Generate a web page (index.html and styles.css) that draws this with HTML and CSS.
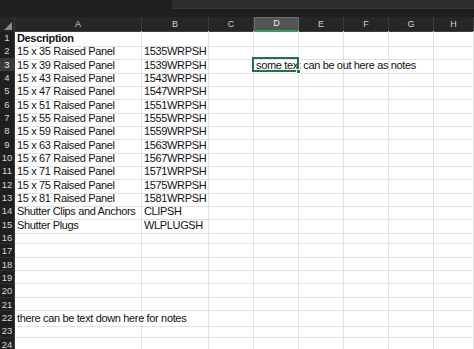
FILE: index.html
```html
<!DOCTYPE html>
<html>
<head>
<meta charset="utf-8">
<link rel="stylesheet" href="styles.css">
</head>
<body>
<div class="app">
  <div class="topbar"><div class="formula"></div></div>
  <div class="row head">
    <div class="corner"><span class="tri"></span></div>
    <div class="ch">A</div><div class="ch">B</div><div class="ch">C</div><div class="ch sel">D</div><div class="ch">E</div><div class="ch">F</div><div class="ch">G</div><div class="ch">H</div>
  </div>
  <div class="row"><div class="rh">1</div><div class="c b">Description</div><div class="c"></div><div class="c"></div><div class="c"></div><div class="c"></div><div class="c"></div><div class="c"></div><div class="c"></div></div>
  <div class="row"><div class="rh">2</div><div class="c">15 x 35 Raised Panel</div><div class="c">1535WRPSH</div><div class="c"></div><div class="c"></div><div class="c"></div><div class="c"></div><div class="c"></div><div class="c"></div></div>
  <div class="row"><div class="rh rsel">3</div><div class="c">15 x 39 Raised Panel</div><div class="c">1539WRPSH</div><div class="c"></div><div class="c active"><span class="over">some text can be out here as notes</span><span class="selbox"><span class="handle"></span></span></div><div class="c"></div><div class="c"></div><div class="c"></div><div class="c"></div></div>
  <div class="row"><div class="rh">4</div><div class="c">15 x 43 Raised Panel</div><div class="c">1543WRPSH</div><div class="c"></div><div class="c"></div><div class="c"></div><div class="c"></div><div class="c"></div><div class="c"></div></div>
  <div class="row"><div class="rh">5</div><div class="c">15 x 47 Raised Panel</div><div class="c">1547WRPSH</div><div class="c"></div><div class="c"></div><div class="c"></div><div class="c"></div><div class="c"></div><div class="c"></div></div>
  <div class="row"><div class="rh">6</div><div class="c">15 x 51 Raised Panel</div><div class="c">1551WRPSH</div><div class="c"></div><div class="c"></div><div class="c"></div><div class="c"></div><div class="c"></div><div class="c"></div></div>
  <div class="row"><div class="rh">7</div><div class="c">15 x 55 Raised Panel</div><div class="c">1555WRPSH</div><div class="c"></div><div class="c"></div><div class="c"></div><div class="c"></div><div class="c"></div><div class="c"></div></div>
  <div class="row"><div class="rh">8</div><div class="c">15 x 59 Raised Panel</div><div class="c">1559WRPSH</div><div class="c"></div><div class="c"></div><div class="c"></div><div class="c"></div><div class="c"></div><div class="c"></div></div>
  <div class="row"><div class="rh">9</div><div class="c">15 x 63 Raised Panel</div><div class="c">1563WRPSH</div><div class="c"></div><div class="c"></div><div class="c"></div><div class="c"></div><div class="c"></div><div class="c"></div></div>
  <div class="row"><div class="rh">10</div><div class="c">15 x 67 Raised Panel</div><div class="c">1567WRPSH</div><div class="c"></div><div class="c"></div><div class="c"></div><div class="c"></div><div class="c"></div><div class="c"></div></div>
  <div class="row"><div class="rh">11</div><div class="c">15 x 71 Raised Panel</div><div class="c">1571WRPSH</div><div class="c"></div><div class="c"></div><div class="c"></div><div class="c"></div><div class="c"></div><div class="c"></div></div>
  <div class="row"><div class="rh">12</div><div class="c">15 x 75 Raised Panel</div><div class="c">1575WRPSH</div><div class="c"></div><div class="c"></div><div class="c"></div><div class="c"></div><div class="c"></div><div class="c"></div></div>
  <div class="row"><div class="rh">13</div><div class="c">15 x 81 Raised Panel</div><div class="c">1581WRPSH</div><div class="c"></div><div class="c"></div><div class="c"></div><div class="c"></div><div class="c"></div><div class="c"></div></div>
  <div class="row"><div class="rh">14</div><div class="c">Shutter Clips and Anchors</div><div class="c">CLIPSH</div><div class="c"></div><div class="c"></div><div class="c"></div><div class="c"></div><div class="c"></div><div class="c"></div></div>
  <div class="row"><div class="rh">15</div><div class="c">Shutter Plugs</div><div class="c">WLPLUGSH</div><div class="c"></div><div class="c"></div><div class="c"></div><div class="c"></div><div class="c"></div><div class="c"></div></div>
  <div class="row"><div class="rh">16</div><div class="c"></div><div class="c"></div><div class="c"></div><div class="c"></div><div class="c"></div><div class="c"></div><div class="c"></div><div class="c"></div></div>
  <div class="row"><div class="rh">17</div><div class="c"></div><div class="c"></div><div class="c"></div><div class="c"></div><div class="c"></div><div class="c"></div><div class="c"></div><div class="c"></div></div>
  <div class="row"><div class="rh">18</div><div class="c"></div><div class="c"></div><div class="c"></div><div class="c"></div><div class="c"></div><div class="c"></div><div class="c"></div><div class="c"></div></div>
  <div class="row"><div class="rh">19</div><div class="c"></div><div class="c"></div><div class="c"></div><div class="c"></div><div class="c"></div><div class="c"></div><div class="c"></div><div class="c"></div></div>
  <div class="row"><div class="rh">20</div><div class="c"></div><div class="c"></div><div class="c"></div><div class="c"></div><div class="c"></div><div class="c"></div><div class="c"></div><div class="c"></div></div>
  <div class="row"><div class="rh">21</div><div class="c"></div><div class="c"></div><div class="c"></div><div class="c"></div><div class="c"></div><div class="c"></div><div class="c"></div><div class="c"></div></div>
  <div class="row"><div class="rh">22</div><div class="c over-cell">there can be text down here for notes</div><div class="c"></div><div class="c"></div><div class="c"></div><div class="c"></div><div class="c"></div><div class="c"></div><div class="c"></div></div>
  <div class="row"><div class="rh">23</div><div class="c"></div><div class="c"></div><div class="c"></div><div class="c"></div><div class="c"></div><div class="c"></div><div class="c"></div><div class="c"></div></div>
  <div class="row"><div class="rh">24</div><div class="c"></div><div class="c"></div><div class="c"></div><div class="c"></div><div class="c"></div><div class="c"></div><div class="c"></div><div class="c"></div></div>
</div>
</body>
</html>
```

FILE: styles.css
```css
* { box-sizing: border-box; margin: 0; padding: 0; }
html, body { width: 474px; height: 349px; overflow: hidden; background: #ffffff; }
body { font-family: "Liberation Sans", Arial, sans-serif; }
.app { display: flex; flex-direction: column; width: 474px; }

.topbar { height: 17px; background: #1f1f1f; display: flex; }
.formula { margin-left: 172px; flex: 1; height: 9px; background: #2d2d2d; border-bottom: 1px solid #363636; }

.row {
  display: grid;
  grid-template-columns: 15px 127px 67px 45px 45px 45px 45px 45px 40px;
  height: 13.333px;
  flex: none;
}
.row.head { height: 14px; background: #262626; }

.corner { position: relative; background: #262626; border-right: 1px solid #3a3a3a; }
.tri {
  position: absolute; right: 2px; bottom: 2px; width: 0; height: 0;
  border-left: 8px solid transparent; border-bottom: 8px solid #8a8a8a;
}
.ch {
  font-size: 9px; color: #d0d0d0; text-align: center; line-height: 14px;
  border-right: 1px solid #3c3c3c; border-bottom: 1px solid #3c3c3c;
}
.ch.sel { background: #555555; color: #f0f0f0; border: 1px solid #6c6c6c; border-bottom: 2px solid #2f9e5f; line-height: 11px; }

.rh {
  background: #1f1f1f; color: #d6d6d6; font-size: 9.5px; text-align: center;
  line-height: 14px; border-bottom: 1px solid #2f2f2f; border-right: 1px solid #3a3a3a;
  overflow: hidden;
}
.rh.rsel { background: #3a3a3a; color: #f0f0f0; }

.c {
  font-size: 11px; letter-spacing: -0.35px; color: #111111; line-height: 15px; padding-left: 2px;
  white-space: nowrap; border-right: 1px solid #e1e1e1; border-bottom: 1px solid #e1e1e1;
  overflow: visible; position: relative;
}
.c.b { font-weight: bold; }
.c.over-cell { z-index: 2; }
.c.active { z-index: 3; }
.over { position: relative; }
.selbox {
  position: absolute; left: -2px; top: -1px; width: 47px; height: 15px;
  border: 2px solid #217346; box-shadow: 1px 0 0 #ffffff;
}
.handle {
  position: absolute; right: -4px; bottom: -4px; width: 5px; height: 5px;
  background: #217346; border: 1px solid #ffffff;
}
```
